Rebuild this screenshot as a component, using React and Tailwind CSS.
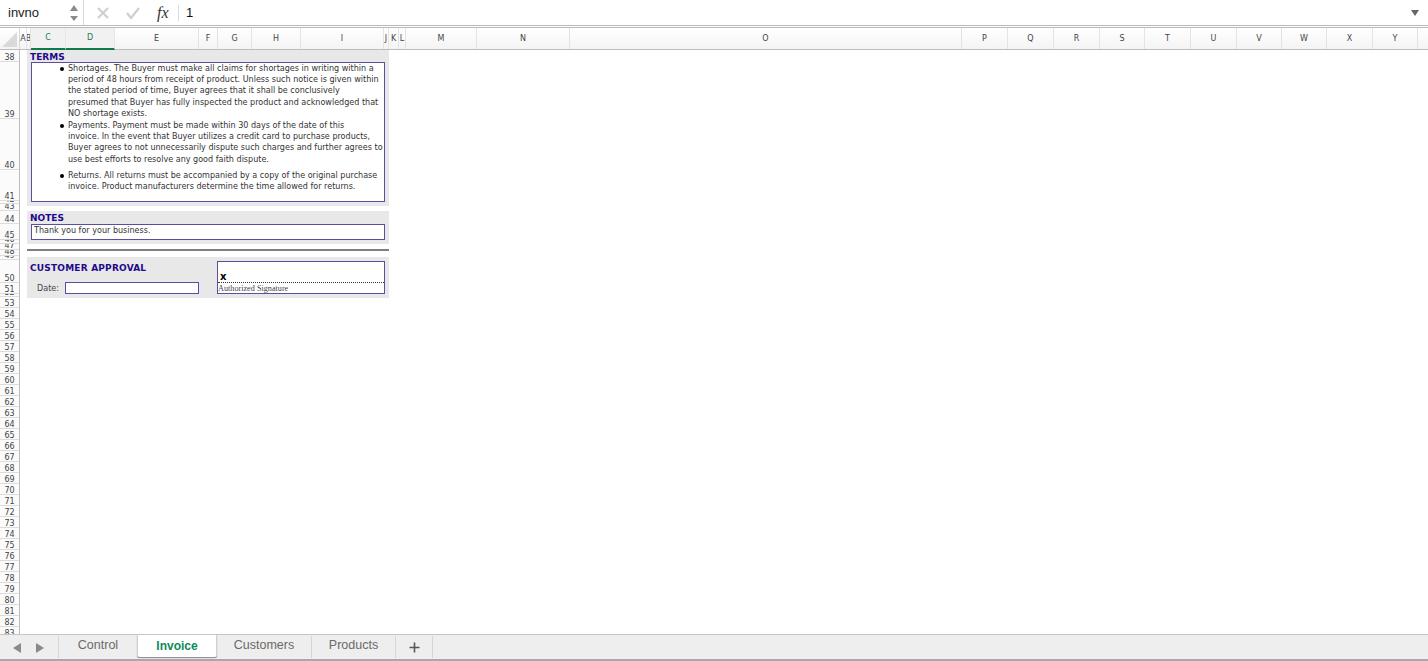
const cols = [
  ["A", 7], ["B", 4], ["C", 35], ["D", 49], ["E", 84], ["F", 19], ["G", 34], ["H", 49], ["I", 83], ["J", 5], ["K", 10], ["L", 7],
  ["M", 71], ["N", 93], ["O", 392], ["P", 46], ["Q", 46], ["R", 46], ["S", 45], ["T", 46], ["U", 46], ["V", 45], ["W", 45], ["X", 46], ["Y", 45],
];

const rowsTop = [
  ["38", 12], ["39", 57], ["40", 51], ["41", 31], ["42", 3], ["43", 7], ["44", 13], ["45", 16], ["46", 4], ["47", 6], ["48", 6], ["49", 4], ["50", 23], ["51", 11], ["52", 3],
];
const rest = Array.from({ length: 31 }, (_, i) => String(53 + i));

function RowLabel({ label, h }) {
  return (
    <div className="flex items-end justify-center overflow-hidden border-b border-[#dcdcdc] leading-[7px]" style={{ height: h }}>
      {label}
    </div>
  );
}

function Bullet({ children, className }) {
  return (
    <div className={"flex " + className}>
      <div className="w-[36px] shrink-0 pr-[4px] pt-[4px] flex justify-end">
        <span className="block w-[4px] h-[4px] rounded-full bg-black" />
      </div>
      <p className="whitespace-pre">{children}</p>
    </div>
  );
}

export default function App() {
  const v = { fontFamily: '"DejaVu Sans", sans-serif' };
  return (
    <div className="w-[1428px] h-[661px] overflow-hidden bg-white flex flex-col relative" style={{ fontFamily: '"Liberation Sans", sans-serif' }}>
      {/* formula bar */}
      <div className="h-[25px] flex items-stretch shrink-0 bg-white">
        <div className="w-[84px] flex items-center justify-between border-r border-[#d8d8d8] pl-[8px] pr-[5px]">
          <span className="text-[13px] text-[#222] mt-[1px]">invno</span>
          <div className="flex flex-col gap-[5px] items-center">
            <svg width="8" height="6" viewBox="0 0 8 6"><path d="M4 0 L8 6 L0 6 Z" fill="#8a8a8a" /></svg>
            <svg width="8" height="5" viewBox="0 0 8 5"><path d="M0 0 L8 0 L4 5 Z" fill="#8a8a8a" /></svg>
          </div>
        </div>
        <div className="flex items-center pl-[12px]">
          <svg width="14" height="14" viewBox="0 0 14 14" stroke="#cfcfcf" strokeWidth="2.2" fill="none"><path d="M2 2 L12 12 M12 2 L2 12" /></svg>
          <svg className="ml-[15px]" width="16" height="14" viewBox="0 0 16 14" stroke="#cfcfcf" strokeWidth="2.2" fill="none"><path d="M2 7 L6 12 L14 2" /></svg>
          <span className="ml-[16px] w-[20px] text-[16px] italic text-[#333] leading-none" style={{ fontFamily: '"Liberation Serif", serif' }}>fx</span>
          <span className="ml-[1px] w-px h-[16px] bg-[#dcdcdc]" />
          <span className="ml-[7px] text-[13px] text-[#111] mt-[1px]">1</span>
        </div>
        <div className="ml-auto flex items-center pr-[9px]">
          <svg width="8" height="6" viewBox="0 0 8 6"><path d="M0 0 L8 0 L4 6 Z" fill="#666" /></svg>
        </div>
      </div>
      <div className="h-[3px] shrink-0 bg-white border-y border-y-[#b9b9b9]" />

      {/* column header */}
      <div className="h-[22px] shrink-0 flex bg-gradient-to-b from-[#ffffff] to-[#f4f4f4] border-b border-[#bdbdbd]" style={v}>
        <div className="w-[20px] shrink-0 border-r border-[#d8d8d8] flex items-end justify-end pb-[2px] pr-[2px]">
          <svg width="15" height="15" viewBox="0 0 15 15"><path d="M15 0 L15 15 L0 15 Z" fill="#d9d9d9" /></svg>
        </div>
        {cols.map(([c, w]) => {
          const sel = c === "C" || c === "D";
          return (
            <div
              key={c}
              style={{ width: w }}
              className={
                "shrink-0 flex items-center justify-center overflow-hidden text-[8px] " +
                (sel
                  ? "text-[#1d7a4f] bg-[#f1f1f1] border-r border-r-[#e6e6e6] border-b-2 border-b-[#0e7a4a] -mb-px"
                  : "text-[#444] border-r border-[#e4e4e4]")
              }
            >
              {c}
            </div>
          );
        })}
      </div>

      {/* sheet */}
      <div className="flex-1 flex min-h-0 overflow-hidden">
        <div className="w-[20px] shrink-0 border-r border-[#bdbdbd] bg-[#fbfbfb] text-[8px] text-[#444]" style={v}>
          {rowsTop.map(([l, h]) => <RowLabel key={l} label={l} h={h} />)}
          {rest.map((l) => <RowLabel key={l} label={l} h={11} />)}
        </div>

        <div className="flex-1 pl-[7px]">
          <div className="w-[362px] text-[8.05px] leading-[11.2px] text-[#333]" style={v}>
            {/* terms */}
            <div className="h-[156px] bg-[#e8e8e8] px-[4px] flex flex-col">
              <div className="h-[12px] -ml-[1px] text-[9px] leading-[14px] font-bold text-[#1f0a8c]">TERMS</div>
              <div className="w-[354px] h-[140px] bg-white border border-[#5b4ea0]">
                <Bullet className="h-[57px]">{"Shortages. The Buyer must make all claims for shortages in writing within a\nperiod of 48 hours from receipt of product. Unless such notice is given within\nthe stated period of time, Buyer agrees that it shall be conclusively\npresumed that Buyer has fully inspected the product and acknowledged that\nNO shortage exists."}</Bullet>
                <Bullet className="h-[50px]">{"Payments. Payment must be made within 30 days of the date of this\ninvoice. In the event that Buyer utilizes a credit card to purchase products,\nBuyer agrees to not unnecessarily dispute such charges and further agrees to\nuse best efforts to resolve any good faith dispute."}</Bullet>
                <Bullet>{"Returns. All returns must be accompanied by a copy of the original purchase\ninvoice. Product manufacturers determine the time allowed for returns."}</Bullet>
              </div>
            </div>

            {/* notes */}
            <div className="mt-[5px] h-[33px] bg-[#e8e8e8] px-[4px]">
              <div className="h-[13px] -ml-[1px] text-[9px] leading-[14px] font-bold text-[#1f0a8c]">NOTES</div>
              <div className="w-[354px] h-[16px] bg-white border border-[#5b4ea0] pl-[2px] leading-[11px]">Thank you for your business.</div>
            </div>

            <div className="mt-[5px] h-[2px] bg-[#808080]" />

            {/* approval */}
            <div className="mt-[6px] h-[41px] bg-[#e8e8e8] flex">
              <div className="w-[190px] pl-[3px] flex flex-col">
                <div className="mt-[4px] text-[9px] leading-[14px] font-bold tracking-[0.2px] text-[#1f0a8c]">CUSTOMER APPROVAL</div>
                <div className="mt-[7px] flex items-center pl-[7px] text-[#444]">
                  <span className="mt-[1px]">Date:</span>
                  <span className="ml-[6px] w-[134px] h-[12px] bg-white border border-[#5b4ea0]" />
                </div>
              </div>
              <div className="w-[168px] h-[33px] mt-[4px] bg-white border border-[#5b4ea0] flex flex-col">
                <div className="h-[21px] shrink-0 border-b border-dotted border-[#333] flex items-end pl-[2px] text-[10px] leading-[11px] font-bold text-black">x</div>
                <div className="text-[8.2px] leading-[11px] text-[#444]" style={{ fontFamily: '"Liberation Serif", serif' }}>Authorized Signature</div>
              </div>
            </div>
          </div>
        </div>
      </div>

      {/* tab bar */}
      <div className="h-[27px] shrink-0 flex bg-[#eeeeee] border-t border-[#c6c6c6] border-b-2 border-b-[#a8a8a8] text-[12.5px] text-[#6a6a6a]">
        <div className="w-[59px] shrink-0 flex items-center pl-[13px] pt-[2px] gap-[15px] border-r border-[#d6d6d6] my-[1px]">
          <svg width="8" height="10" viewBox="0 0 8 10"><path d="M8 0 L8 10 L0 5 Z" fill="#8a8a8a" /></svg>
          <svg width="8" height="10" viewBox="0 0 8 10"><path d="M0 0 L0 10 L8 5 Z" fill="#8a8a8a" /></svg>
        </div>
        <div className="w-[78px] shrink-0 flex items-center justify-center pb-[3px]">Control</div>
        <div className="w-[80px] shrink-0 flex items-center justify-center pb-[1px] bg-white text-[12px] font-bold text-[#0e8a5c] rounded-b-[2px] shadow-[0_1px_1px_#888] h-[22px] border-x border-[#d0d0d0]">Invoice</div>
        <div className="w-[95px] shrink-0 flex items-center justify-center pb-[3px] border-r border-[#d6d6d6] my-[1px]">Customers</div>
        <div className="w-[84px] shrink-0 flex items-center justify-center pb-[3px] border-r border-[#d6d6d6] my-[1px]">Products</div>
        <div className="w-[37px] shrink-0 flex items-center justify-center pt-[1px] border-r border-[#d6d6d6] my-[1px]">
          <svg width="11" height="11" viewBox="0 0 11 11" stroke="#555" strokeWidth="1.6"><path d="M5.5 0.5 V10.5 M0.5 5.5 H10.5" /></svg>
        </div>
      </div>
    </div>
  );
}
